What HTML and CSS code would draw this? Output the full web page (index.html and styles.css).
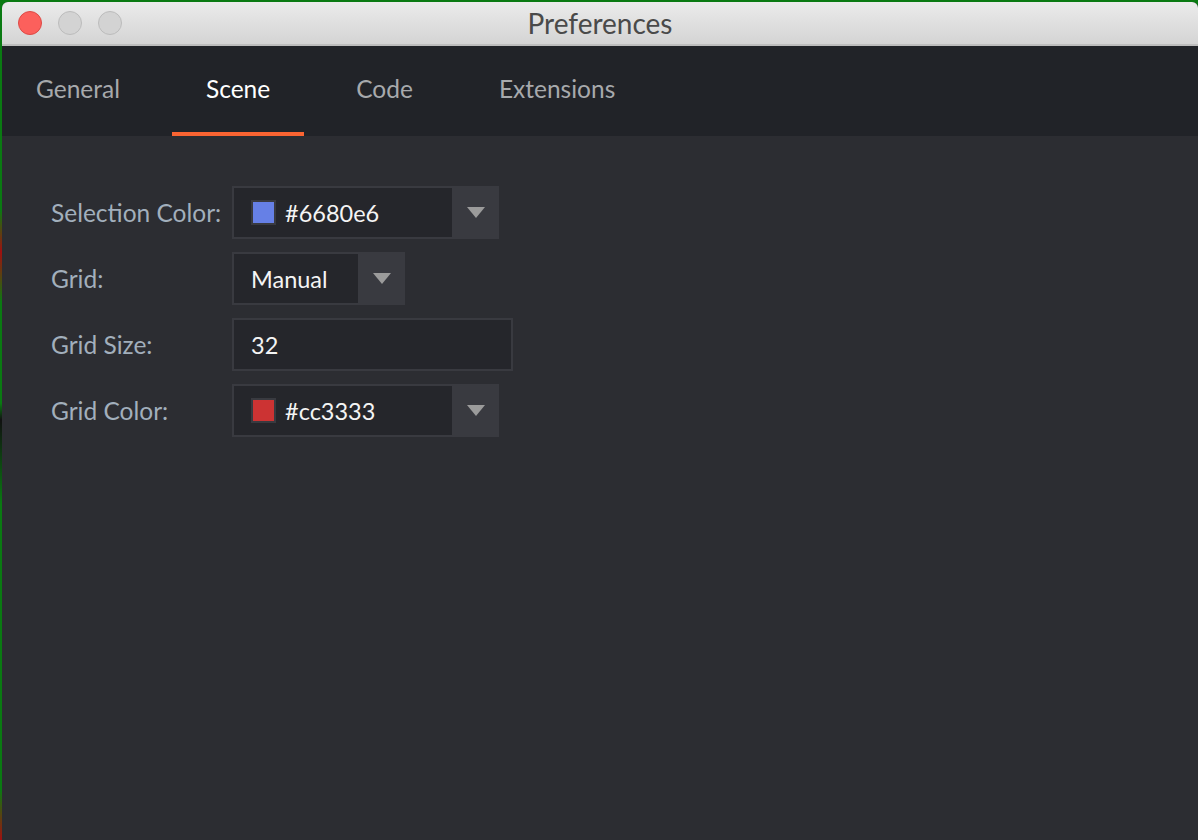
FILE: index.html
```html
<!DOCTYPE html>
<html>
<head>
<meta charset="utf-8">
<title>Preferences</title>
<link rel="stylesheet" href="styles.css">
</head>
<body>
<div class="window">
  <div class="titlebar">
    <div class="lights">
      <span class="light red"></span>
      <span class="light"></span>
      <span class="light"></span>
    </div>
    <div class="title">Preferences</div>
  </div>
  <div class="tabs">
    <div class="tab">General</div>
    <div class="tab active">Scene</div>
    <div class="tab">Code</div>
    <div class="tab">Extensions</div>
  </div>
  <div class="content">
    <div class="form">
      <div class="label">Selection Color:</div>
      <div class="field">
        <div class="box color-box">
          <span class="swatch" style="background:#6680e6"></span>
          <span class="value">#6680e6</span>
        </div>
        <div class="drop"><span class="tri"></span></div>
      </div>

      <div class="label">Grid:</div>
      <div class="field">
        <div class="box select-box">
          <span class="value">Manual</span>
        </div>
        <div class="drop"><span class="tri"></span></div>
      </div>

      <div class="label">Grid Size:</div>
      <div class="field">
        <div class="box input-box">
          <span class="value">32</span>
        </div>
      </div>

      <div class="label">Grid Color:</div>
      <div class="field">
        <div class="box color-box">
          <span class="swatch" style="background:#cc3333"></span>
          <span class="value">#cc3333</span>
        </div>
        <div class="drop"><span class="tri"></span></div>
      </div>
    </div>
  </div>
</div>
</body>
</html>
```

FILE: styles.css
```css
html, body {
  margin: 0;
  padding: 0;
  height: 100%;
}
body {
  background: linear-gradient(180deg, #0a7a12 0%, #0a7a12 25%, #a01010 30%, #0a7a12 36%, #0a7a12 48%, #111 50%, #0a7a12 60%, #0a7a12 94%, #a01010 100%);
  overflow: hidden;
  font-family: Lato, "Liberation Sans", sans-serif;
}
.window {
  margin: 2px 0 0 2px;
  height: 838px;
  width: 1196px;
  display: flex;
  flex-direction: column;
  border-radius: 6px 6px 0 0;
  overflow: hidden;
  background: #2c2d32;
}
.titlebar {
  height: 42px;
  flex: none;
  background: linear-gradient(180deg, #ebebeb 0%, #d4d4d4 100%);
  border-bottom: 2px solid #bdbdbd;
  display: flex;
  align-items: center;
  position: relative;
}
.lights {
  display: flex;
  gap: 16px;
  padding-left: 16px;
}
.light {
  width: 22px;
  height: 22px;
  border-radius: 50%;
  background: #d3d3d3;
  border: 1px solid #bcbcbc;
}
.light.red {
  background: #fc605c;
  border-color: #dd4a46;
}
.title {
  position: absolute;
  left: 0;
  right: 0;
  top: 0;
  bottom: 0;
  display: flex;
  align-items: center;
  justify-content: center;
  font-size: 28px;
  color: #4a4a4a;
}
.tabs {
  height: 90px;
  flex: none;
  background: #212328;
  display: flex;
  gap: 18px;
}
.tab {
  padding: 0 34px;
  display: flex;
  align-items: center;
  font-size: 24.5px;
  color: #a7a9ac;
  border-bottom: 4px solid transparent;
  margin-top: -2px;
}
.tab.active {
  color: #ffffff;
  border-bottom-color: #fa6432;
}
.content {
  flex: 1;
  background: #2c2d32;
  padding: 50px 0 0 49px;
}
.form {
  display: grid;
  grid-template-columns: 181px auto;
  row-gap: 13px;
  align-items: center;
}
.label {
  font-size: 24.5px;
  color: #a2afbc;
}
.field {
  display: flex;
  height: 53px;
  justify-self: start;
}
.box {
  box-sizing: border-box;
  height: 53px;
  border: 2px solid #393a40;
  background: #25262b;
  display: flex;
  align-items: center;
  padding-left: 17px;
}
.color-box {
  width: 220px;
  border-right: none;
}
.select-box {
  width: 126px;
  border-right: none;
}
.input-box {
  width: 281px;
}
.swatch {
  box-sizing: border-box;
  width: 25px;
  height: 25px;
  border: 2px solid #393a40;
  margin-right: 9px;
}
.value {
  font-size: 23.5px;
  color: #f4f4f4;
}
.drop {
  width: 47px;
  height: 53px;
  background: #393a40;
  display: flex;
  align-items: center;
  justify-content: center;
}
.tri {
  width: 0;
  height: 0;
  border-left: 9px solid transparent;
  border-right: 9px solid transparent;
  border-top: 11px solid #9b9b9b;
}
```
